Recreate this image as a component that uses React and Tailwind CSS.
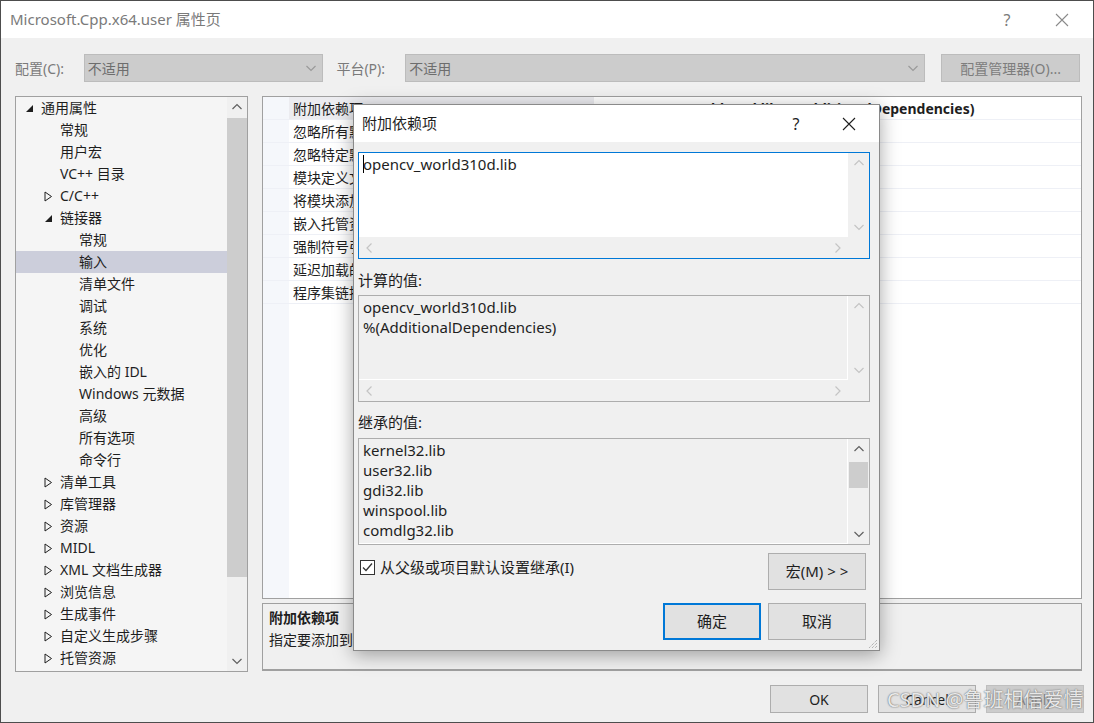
import React from 'react';

const TREE = [
  [0, 'open', '通用属性'],
  [1, null, '常规'],
  [1, null, '用户宏'],
  [1, null, 'VC++ 目录'],
  [1, 'closed', 'C/C++'],
  [1, 'open', '链接器'],
  [2, null, '常规'],
  [2, null, '输入', true],
  [2, null, '清单文件'],
  [2, null, '调试'],
  [2, null, '系统'],
  [2, null, '优化'],
  [2, null, '嵌入的 IDL'],
  [2, null, 'Windows 元数据'],
  [2, null, '高级'],
  [2, null, '所有选项'],
  [2, null, '命令行'],
  [1, 'closed', '清单工具'],
  [1, 'closed', '库管理器'],
  [1, 'closed', '资源'],
  [1, 'closed', 'MIDL'],
  [1, 'closed', 'XML 文档生成器'],
  [1, 'closed', '浏览信息'],
  [1, 'closed', '生成事件'],
  [1, 'closed', '自定义生成步骤'],
  [1, 'closed', '托管资源'],
];

const INDENT = ['pl-[9px]', 'pl-[28px]', 'pl-[47px]'];

const PROPS = [
  ['附加依赖项', 'opencv_world310d.lib;%(AdditionalDependencies)'],
  ['忽略所有默认库', ''],
  ['忽略特定默认库', ''],
  ['模块定义文件', ''],
  ['将模块添加到程序集', ''],
  ['嵌入托管资源文件', ''],
  ['强制符号引用', ''],
  ['延迟加载的 DLL', ''],
  ['程序集链接资源', ''],
];

function Chevron({ dir, color = '#c4c4c4' }) {
  const d = {
    up: 'M1.5 7 L6 2.5 L10.5 7',
    down: 'M1.5 4 L6 8.5 L10.5 4',
    left: 'M7.5 1.5 L3 6 L7.5 10.5',
    right: 'M4.5 1.5 L9 6 L4.5 10.5',
  }[dir];
  return (
    <svg width="12" height="12" viewBox="0 0 12 12">
      <path d={d} fill="none" stroke={color} strokeWidth="1.2" />
    </svg>
  );
}

function Triangle({ state }) {
  if (state === 'open') {
    return (
      <svg width="9" height="9" viewBox="0 0 9 9">
        <polygon points="8,1 8,8 1,8" fill="#1e1e1e" />
      </svg>
    );
  }
  return (
    <svg width="9" height="11" viewBox="0 0 9 11">
      <polygon points="1,1 7.5,5.5 1,10" fill="none" stroke="#1e1e1e" strokeWidth="1" />
    </svg>
  );
}

function CloseX({ color = '#1e1e1e' }) {
  return (
    <svg width="14" height="14" viewBox="0 0 14 14">
      <path d="M1 1 L13 13 M13 1 L1 13" stroke={color} strokeWidth="1.1" />
    </svg>
  );
}

function TextBox({ lines, focused, bg, arrowColor, thumb, caret }) {
  return (
    <div
      className={`flex flex-col h-[107px] border ${
        focused ? 'border-[#0078d7]' : 'border-[#adadad]'
      } ${bg}`}
    >
      <div className="flex flex-1 min-h-0">
        <div className={`flex-1 pl-[4px] pt-[1px] text-[15px] leading-[20px] text-[#1e1e1e] ${focused ? 'bg-white' : 'border-r border-b border-white'}`}>
          {lines.map((l, i) => (
            <div key={i} className="flex items-center">
              {caret && i === 0 && <span className="w-px h-[18px] bg-black -mr-px" />}
              {l}
            </div>
          ))}
        </div>
        <div className="w-[21px] flex flex-col items-center bg-[#f0f0f0]">
          <div className="h-[21px] flex items-center justify-center">
            <Chevron dir="up" color={arrowColor} />
          </div>
          <div className="flex-1 w-full">
            {thumb && <div className="mt-[2px] h-[26px] bg-[#cdcdcd] mx-[1px]" />}
          </div>
          <div className="h-[21px] flex items-center justify-center">
            <Chevron dir="down" color={arrowColor} />
          </div>
        </div>
      </div>
      {!thumb && (
        <div className="h-[21px] flex bg-[#f0f0f0]">
          <div className="flex-1 flex items-center justify-between px-[5px]">
            <Chevron dir="left" color="#c4c4c4" />
            <Chevron dir="right" color="#c4c4c4" />
          </div>
          <div className="w-[21px]" />
        </div>
      )}
    </div>
  );
}

function Dialog() {
  return (
    <div className="absolute left-[352px] top-[103px] w-[527px] h-[547px] border border-[#8a8a8a] bg-[#f0f0f0] shadow-[0_4px_18px_rgba(0,0,0,0.35)] flex flex-col">
      <div className="h-[37px] bg-white flex items-center pl-[8px] text-[15px] text-[#1e1e1e]">
        <span className="flex-1">附加依赖项</span>
        <span className="w-[20px] text-center text-[16px] mr-[36px] text-[#1e1e1e]">?</span>
        <span className="mr-[23px] flex items-center">
          <CloseX />
        </span>
      </div>
      <div className="flex flex-col pl-[4px] pr-[9px] pt-[10px] text-[15px] text-[#1e1e1e]">
        <TextBox lines={['opencv_world310d.lib']} focused bg="bg-white" arrowColor="#c4c4c4" caret />
        <div className="mt-[11px] mb-[5px] h-[20px] leading-[20px]">计算的值:</div>
        <TextBox
          lines={['opencv_world310d.lib', '%(AdditionalDependencies)']}
          bg="bg-[#f0f0f0]"
          arrowColor="#c4c4c4"
        />
        <div className="mt-[10px] mb-[6px] h-[20px] leading-[20px]">继承的值:</div>
        <TextBox
          lines={['kernel32.lib', 'user32.lib', 'gdi32.lib', 'winspool.lib', 'comdlg32.lib']}
          bg="bg-[#f0f0f0]"
          arrowColor="#606060"
          thumb
        />
        <div className="mt-[8px] flex justify-between">
          <div className="flex items-center gap-[5px] pl-[2px] pt-[4px] h-[22px] mt-[1px]">
            <span className="w-[15px] h-[15px] border border-[#333] bg-white flex items-center justify-center">
              <svg width="11" height="11" viewBox="0 0 11 11">
                <path d="M1 5.5 L4 8.5 L10 1.5" fill="none" stroke="#333" strokeWidth="1.3" />
              </svg>
            </span>
            <span className="leading-[20px]">从父级或项目默认设置继承(I)</span>
          </div>
          <button className="w-[98px] h-[37px] mr-[4px] bg-[#e1e1e1] border border-[#adadad] text-[15px]">
            宏(M) &gt; &gt;
          </button>
        </div>
        <div className="mt-[13px] flex justify-end gap-[7px] pr-[4px]">
          <button className="w-[98px] h-[37px] bg-[#e1e1e1] border-2 border-[#0078d7] text-[15px]">确定</button>
          <button className="w-[98px] h-[37px] bg-[#e1e1e1] border border-[#adadad] text-[15px]">取消</button>
        </div>
      </div>
      <svg className="absolute right-[1px] bottom-[1px]" width="11" height="11" viewBox="0 0 11 11">
        <path d="M10 2 L2 10 M10 5 L5 10 M10 8 L8 10" stroke="#9a9a9a" strokeWidth="1" strokeDasharray="1 1" />
      </svg>
    </div>
  );
}

export default function App() {
  return (
    <div className="relative w-[1094px] h-[723px] overflow-hidden bg-[#f0f0f0] border border-[#4d4d4d] font-['Noto_Sans','Noto_Sans_CJK_SC',sans-serif] text-[#1e1e1e]">
      {/* title bar */}
      <div className="h-[37px] bg-white flex items-center pl-[9px] text-[15px] text-[#7a7a7a]">
        <span className="flex-1">Microsoft.Cpp.x64.user 属性页</span>
        <span className="w-[20px] text-center text-[16px] mr-[38px]">?</span>
        <span className="mr-[24px] flex items-center">
          <CloseX color="#8a8a8a" />
        </span>
      </div>

      {/* config row */}
      <div className="flex items-center h-[28px] mt-[16px] pl-[14px] pr-[13px] text-[14px]">
        <span className="w-[69px] text-[#7a7a7a]">配置(C):</span>
        <div className="w-[240px] h-[28px] bg-[#cccccc] border border-[#bcbcbc] flex items-center justify-between pl-[3px] pr-[5px] text-[#6d6d6d]">
          <span>不适用</span>
          <Chevron dir="down" color="#9a9a9a" />
        </div>
        <span className="ml-[13px] w-[69px] text-[#7a7a7a]">平台(P):</span>
        <div className="w-[521px] h-[28px] bg-[#cccccc] border border-[#bcbcbc] flex items-center justify-between pl-[3px] pr-[5px] text-[#6d6d6d]">
          <span>不适用</span>
          <Chevron dir="down" color="#9a9a9a" />
        </div>
        <div className="ml-[16px] w-[139px] h-[28px] bg-[#cccccc] border border-[#bcbcbc] flex items-center justify-center text-[#7d7d7d]">
          配置管理器(O)...
        </div>
      </div>

      {/* main area */}
      <div className="flex mt-[14px] pl-[14px] gap-[14px]">
        {/* tree */}
        <div className="w-[233px] h-[576px] border border-[#a0a0a0] bg-[#f5f5f5] flex text-[14px]">
          <div className="flex-1 flex flex-col">
            {TREE.map(([lvl, st, label, sel], i) => (
              <div
                key={i}
                className={`h-[22px] shrink-0 flex items-center ${INDENT[lvl]} ${sel ? 'bg-[#cccedb]' : ''}`}
              >
                <span className="w-[16px] flex items-center">{st && <Triangle state={st} />}</span>
                <span className="leading-[22px] whitespace-nowrap">{label}</span>
              </div>
            ))}
          </div>
          <div className="w-[20px] flex flex-col bg-[#f0f0f0]">
            <div className="h-[21px] flex items-center justify-center">
              <Chevron dir="up" color="#606060" />
            </div>
            <div className="h-[459px] bg-[#cdcdcd]" />
            <div className="flex-1" />
            <div className="h-[21px] flex items-center justify-center">
              <Chevron dir="down" color="#606060" />
            </div>
          </div>
        </div>

        {/* right column */}
        <div className="w-[820px] flex flex-col">
          <div className="h-[503px] border border-[#a0a0a0] bg-white flex flex-col text-[14px]">
            {PROPS.map(([name, value], i) => (
              <div key={i} className="h-[23px] flex border-b border-[#eef0f6]">
                <div className="w-[26px] bg-[#f5f7fb]" />
                <div className={`w-[305px] pl-[4px] flex items-center whitespace-nowrap overflow-hidden ${i === 0 ? 'bg-[#ececf0]' : ''}`}>
                  {name}
                </div>
                <div className="flex-1 pl-[34px] flex items-center font-bold whitespace-nowrap">{value}</div>
              </div>
            ))}
            <div className="flex-1 flex">
              <div className="w-[26px] bg-[#f5f7fb]" />
            </div>
          </div>
          <div className="mt-[4px] h-[68px] border border-[#a0a0a0] border-b-2 bg-[#f0f0f0] px-[6px] pt-[3px] text-[14px]">
            <div className="font-bold leading-[22px]">附加依赖项</div>
            <div className="leading-[22px]">指定要添加到链接命令行的附加项。例如 kernel32.lib</div>
          </div>
        </div>
      </div>

      {/* bottom buttons */}
      <div className="flex justify-end gap-[10px] mt-[13px] pr-[9px] text-[14px]">
        <button className="w-[98px] h-[28px] bg-[#e1e1e1] border border-[#adadad]">OK</button>
        <button className="w-[98px] h-[28px] bg-[#e1e1e1] border border-[#adadad]">Cancel</button>
        <button className="w-[98px] h-[28px] bg-[#cccccc] border border-[#bfbfbf] text-[#838383]">Apply</button>
      </div>

      <Dialog />

      <div className="absolute left-[886px] top-[685px] text-[20px] leading-[28px] text-[rgba(255,255,255,0.85)] [text-shadow:0_0_1px_#666,0_0_2px_#888] whitespace-nowrap">
        CSDN @鲁班相信爱情
      </div>
    </div>
  );
}
